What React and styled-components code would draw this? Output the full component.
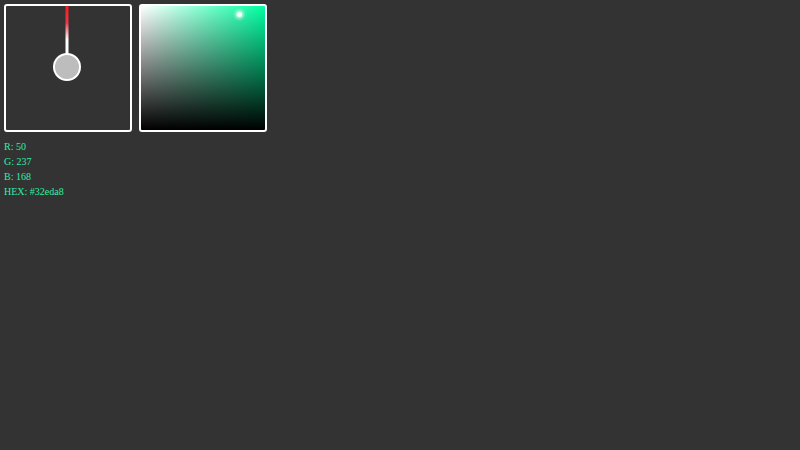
import React from "react";
import styled, { createGlobalStyle } from "styled-components";

const Global = createGlobalStyle`
  html, body { margin: 0; padding: 0; background: #333333; }
  body { font-family: "Liberation Serif", "Times New Roman", serif; }
`;

const Page = styled.div`
  padding: 4px;
`;

const Row = styled.div`
  display: flex;
  gap: 7px;
`;

const Panel = styled.div`
  position: relative;
  width: 124px;
  height: 124px;
  border: 2px solid #ffffff;
  border-radius: 3px;
  overflow: hidden;
  background: ${(p) => p.$bg || "#333333"};
`;

const Marker = styled.div`
  position: absolute;
  width: 5px;
  height: 5px;
  margin: -2.5px 0 0 -2.5px;
  border-radius: 50%;
  background: #ffffff;
  box-shadow: 0 0 3px 2px rgba(255, 255, 255, 0.6);
`;

const Info = styled.div`
  margin-top: 7px;
  color: #32eda8;
  font-size: 10px;
  line-height: 15px;
`;

const hue = 158;
const sat = 0.79;
const val = 0.93;

export default function App() {
  return (
    <Page>
      <Global />
      <Row>
        <Panel>
          <svg width="124" height="124" viewBox="0 0 124 124">
            <defs>
              <linearGradient id="needle" x1="0" y1="0" x2="0" y2="1">
                <stop offset="0" stopColor="#ff1a1a" />
                <stop offset="0.35" stopColor="#e8384a" />
                <stop offset="0.7" stopColor="#ffffff" />
                <stop offset="1" stopColor="#ffffff" />
              </linearGradient>
            </defs>
            <rect x="59.5" y="0" width="3" height="48" fill="url(#needle)" />
            <circle cx="61" cy="61" r="13" fill="#bdbdbd" stroke="#ffffff" strokeWidth="2" />
          </svg>
        </Panel>
        <Panel
          $bg={`linear-gradient(to top, #000 0%, rgba(0,0,0,0) 100%), linear-gradient(to right, #fff 0%, hsl(${hue}, 100%, 50%) 100%)`}
        >
          <Marker style={{ left: `${sat * 124 + 1}px`, top: `${(1 - val) * 124}px` }} />
        </Panel>
      </Row>
      <Info>
        <div>R: 50</div>
        <div>G: 237</div>
        <div>B: 168</div>
        <div>HEX: #32eda8</div>
      </Info>
    </Page>
  );
}
